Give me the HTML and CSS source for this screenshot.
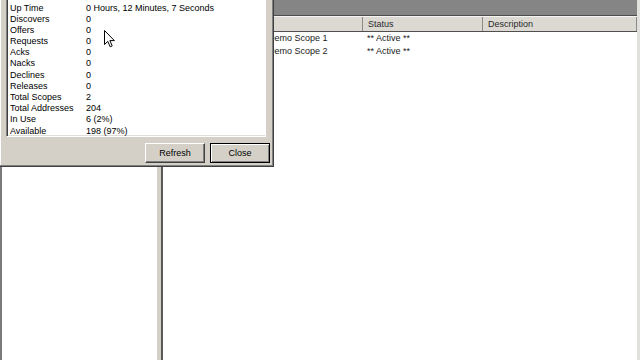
FILE: index.html
```html
<!DOCTYPE html>
<html lang="en">
<head>
  <meta charset="UTF-8">
  <meta name="viewport" content="width=device-width, initial-scale=1.0">
  <title>DHCP - Server Statistics</title>
  <link rel="stylesheet" href="styles.css">
</head>
<body>
  <div class="console">
    <div class="tree-pane"></div>
    <div class="splitter"></div>
    <div class="result-pane">
      <div class="banner"></div>
      <div class="list-header">
        <div class="col col-name">Scope Name</div>
        <div class="col col-status">Status</div>
        <div class="col col-desc">Description</div>
      </div>
      <div class="list-body">
        <div class="list-row">
          <div class="col col-name">Demo Scope 1</div>
          <div class="col col-status">** Active **</div>
          <div class="col col-desc"></div>
        </div>
        <div class="list-row">
          <div class="col col-name">Demo Scope 2</div>
          <div class="col col-status">** Active **</div>
          <div class="col col-desc"></div>
        </div>
      </div>
    </div>
  </div>

  <div class="dialog">
    <div class="stats">
      <div class="stat-row"><span class="stat-label">Up Time</span><span class="stat-value">0 Hours, 12 Minutes, 7 Seconds</span></div>
      <div class="stat-row"><span class="stat-label">Discovers</span><span class="stat-value">0</span></div>
      <div class="stat-row"><span class="stat-label">Offers</span><span class="stat-value">0</span></div>
      <div class="stat-row"><span class="stat-label">Requests</span><span class="stat-value">0</span></div>
      <div class="stat-row"><span class="stat-label">Acks</span><span class="stat-value">0</span></div>
      <div class="stat-row"><span class="stat-label">Nacks</span><span class="stat-value">0</span></div>
      <div class="stat-row"><span class="stat-label">Declines</span><span class="stat-value">0</span></div>
      <div class="stat-row"><span class="stat-label">Releases</span><span class="stat-value">0</span></div>
      <div class="stat-row"><span class="stat-label">Total Scopes</span><span class="stat-value">2</span></div>
      <div class="stat-row"><span class="stat-label">Total Addresses</span><span class="stat-value">204</span></div>
      <div class="stat-row"><span class="stat-label">In Use</span><span class="stat-value">6 (2%)</span></div>
      <div class="stat-row"><span class="stat-label">Available</span><span class="stat-value">198 (97%)</span></div>
    </div>
    <div class="dialog-buttons">
      <button class="btn">Refresh</button>
      <button class="btn btn-default">Close</button>
    </div>
  </div>

  <svg class="cursor" viewBox="0 0 12 18" xmlns="http://www.w3.org/2000/svg">
    <path d="M0.5 0.5 L0.5 14.5 L3.8 11.4 L6.2 16.8 L8.2 15.9 L5.9 10.6 L10.4 10.6 Z" fill="#fff" stroke="#000" stroke-width="1" stroke-linejoin="miter"></path>
  </svg>
</body>
</html>
```

FILE: styles.css
```css
:root {
  --face: #d4d0c8;
  --shadow: #808080;
  --dark: #404040;
  --light: #ffffff;
}

* {
  margin: 0;
  padding: 0;
  box-sizing: border-box;
}

body {
  width: 640px;
  height: 360px;
  overflow: hidden;
  background: #ffffff;
  font-family: "Liberation Sans", Arial, sans-serif;
  font-size: 9px;
  color: #000;
}

/* background console */

.console {
  display: flex;
  height: 360px;
}

.tree-pane {
  width: 157px;
  background: #ffffff;
  border-left: 2px solid #7a7a7a;
}

.splitter {
  width: 4px;
  background: var(--face);
}

.result-pane {
  flex: 1;
  display: flex;
  flex-direction: column;
  background: #ffffff;
  border-left: 2px solid #5a5a5a;
  border-right: 3px solid #e2e0dc;
}

.banner {
  height: 16px;
  background: #858585;
  border-bottom: 1px solid #4c4c4c;
}

.list-header {
  display: flex;
  height: 16px;
  background: #dcd9d3;
  border-top: 1px solid #f4f4f4;
  border-bottom: 1px solid #505050;
  color: #2a2a2a;
}

.list-header .col {
  border-right: 1px solid #8a8a8a;
  line-height: 14px;
}

.col {
  padding-left: 5px;
  white-space: nowrap;
  overflow: hidden;
}

.col-name {
  width: 200px;
}

.list-body .col-name {
  padding-left: 105px;
}

.col-status {
  width: 120px;
}

.col-desc {
  flex: 1;
}

.list-row {
  display: flex;
  height: 13px;
  line-height: 13px;
  color: #1a1a1a;
}

.list-row .col-status {
  padding-left: 4px;
}

/* statistics dialog */

.dialog {
  position: absolute;
  left: 0;
  top: 0;
  width: 274px;
  height: 167px;
  background: var(--face);
  border-right: 1px solid var(--dark);
  border-bottom: 1px solid var(--dark);
  box-shadow: inset -1px -1px var(--shadow), inset 1px 0 var(--light);
}

.stats {
  margin-left: 6px;
  width: 260px;
  height: 137px;
  padding: 2.5px 0 0 3px;
  background: #ffffff;
  border-left: 1px solid var(--shadow);
  border-right: 1px solid var(--light);
  border-bottom: 1px solid var(--light);
  box-shadow: inset 1px 0 var(--dark), inset 0 -1px #e0ded8;
}

.stat-row {
  display: flex;
  height: 11.2px;
  line-height: 11.2px;
  white-space: nowrap;
}

.stat-label {
  width: 76px;
}

.dialog-buttons {
  display: flex;
  justify-content: flex-end;
  gap: 5px;
  margin-top: 6px;
  padding-right: 3px;
}

.btn {
  width: 60px;
  height: 20px;
  background: var(--face);
  font-family: "Liberation Sans", Arial, sans-serif;
  font-size: 9px;
  color: #000;
  border: 1px solid;
  border-color: var(--light) var(--dark) var(--dark) var(--light);
  box-shadow: inset -1px -1px var(--shadow);
}

.btn-default {
  border: 1px solid #000;
  box-shadow: inset 1px 1px var(--light), inset -1px -1px var(--shadow);
}

.cursor {
  position: absolute;
  left: 104px;
  top: 30px;
  width: 12px;
  height: 18px;
}
```
